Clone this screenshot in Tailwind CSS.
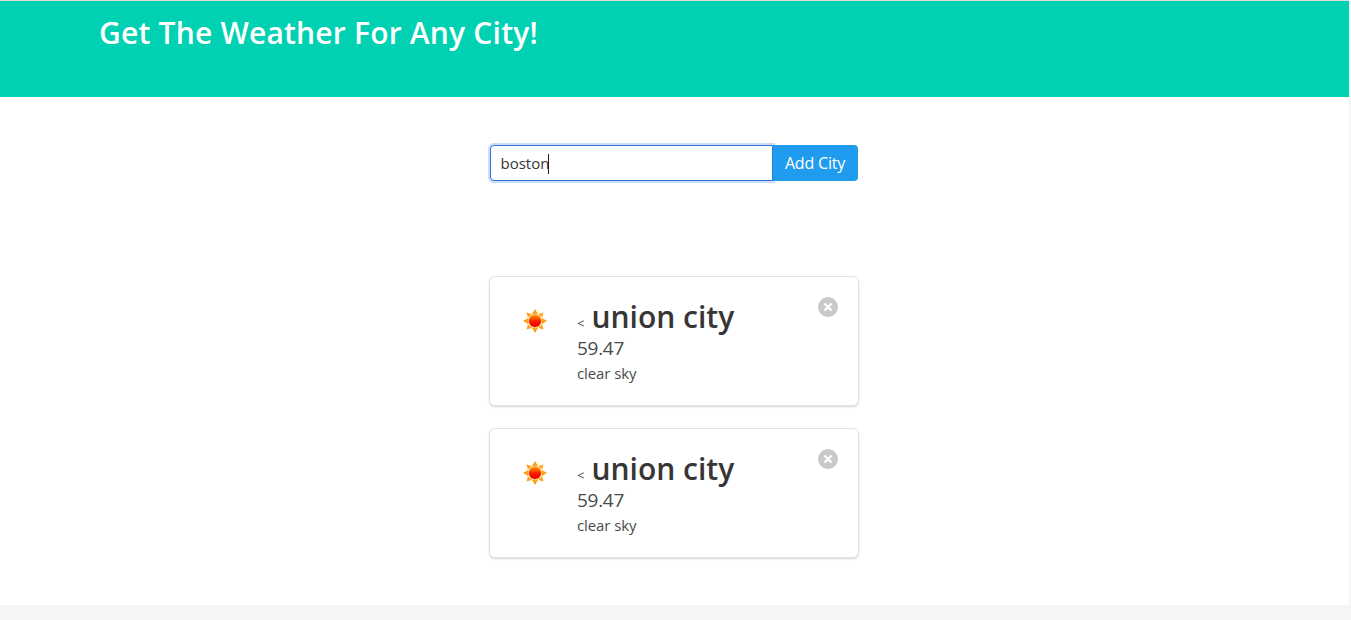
<!DOCTYPE html>
<html lang="en">
<head>
  <meta charset="UTF-8" />
  <title>Weather</title>
  <script src="https://cdn.jsdelivr.net/npm/@tailwindcss/browser@4"></script>
</head>
<body class="bg-[#f5f5f5] h-[620px] overflow-hidden font-['Open_Sans',sans-serif]">
<div class="w-[1349px] bg-white h-[605px] flex flex-col border-t border-[#dddddd]">
  <!-- Header -->
  <header class="bg-[#00d1b2] h-[96px] pl-[99px] pt-[12px]">
    <h1 class="text-white text-[30px] leading-[40px] font-semibold tracking-[0.2px]">Get The Weather For Any City!</h1>
  </header>

  <main class="flex flex-col items-center">
    <!-- Search -->
    <form class="flex w-[369px] mt-[48px] ml-[-1px]">
      <div class="w-[283px] h-[36px] bg-white border border-[#3273dc] rounded-l-[4px] shadow-[0_0_0_2px_rgba(50,115,220,0.25)] pl-[10px] flex items-center text-[15px] text-[#363636]">
        <span class="mt-[1px]">boston</span><span class="w-px h-[20px] bg-[#222222] ml-[-1px] mt-[1px]"></span>
      </div>
      <button type="button" class="w-[85px] h-[36px] bg-[#209cee] text-white text-[16px] tracking-[-0.2px] rounded-r-[4px]">Add City</button>
    </form>

    <!-- Cards -->
    <div class="flex flex-col gap-[22px] mt-[95px] ml-[-1px]">
      <div class="relative w-[370px] h-[130px] bg-white border border-[#e3e3e3] rounded-[6px] shadow-[0_1px_2px_rgba(10,10,10,0.18)] flex pl-[33px] pt-[32px]">
        <svg width="24" height="24" viewBox="0 0 24 24" class="shrink-0">
          <defs><linearGradient id="sun1" x1="0" y1="0" x2="0" y2="1"><stop offset="0" stop-color="#ff9a00"/><stop offset="0.55" stop-color="#ff1500"/><stop offset="1" stop-color="#ee0000"/></linearGradient></defs>
          <g fill="#ffa21c">
            <path d="M12 0l3 5h-6zM12 24l3-5h-6zM0 12l5-3v6zM24 12l-5-3v6zM3.5 3.5l5.2 1.4-3.8 3.8zM20.5 3.5l-5.2 1.4 3.8 3.8zM3.5 20.5l5.2-1.4-3.8-3.8zM20.5 20.5l-5.2-1.4 3.8-3.8z"/>
          </g>
          <circle cx="12" cy="12" r="7" fill="#ffb347"/>
          <circle cx="12" cy="12" r="6" fill="url(#sun1)"/>
        </svg>
        <div class="ml-[30px] mt-[-13px] text-[#4a4a4a]">
          <div class="h-[40px] mt-[1px] flex items-baseline text-[#363636]"><span class="text-[13px] text-[#4a4a4a] mr-[7px]">&lt;</span><span class="text-[30px] leading-[40px] font-semibold">union city</span></div>
          <div class="text-[19px] leading-[26px] mt-[-2px] tracking-[-0.3px]">59.47</div>
          <div class="text-[15px] leading-[24px] tracking-[-0.1px]">clear sky</div>
        </div>
        <div class="absolute left-[328px] top-[20px] w-[20px] h-[20px] rounded-full bg-[#c9c9c9] flex items-center justify-center">
          <svg width="10" height="10" viewBox="0 0 10 10"><path d="M1.5 1.5l7 7M8.5 1.5l-7 7" stroke="#fff" stroke-width="2.4"/></svg>
        </div>
      </div>

      <div class="relative w-[370px] h-[130px] bg-white border border-[#e3e3e3] rounded-[6px] shadow-[0_1px_2px_rgba(10,10,10,0.18)] flex pl-[33px] pt-[32px]">
        <svg width="24" height="24" viewBox="0 0 24 24" class="shrink-0">
          <defs><linearGradient id="sun2" x1="0" y1="0" x2="0" y2="1"><stop offset="0" stop-color="#ff9a00"/><stop offset="0.55" stop-color="#ff1500"/><stop offset="1" stop-color="#ee0000"/></linearGradient></defs>
          <g fill="#ffa21c">
            <path d="M12 0l3 5h-6zM12 24l3-5h-6zM0 12l5-3v6zM24 12l-5-3v6zM3.5 3.5l5.2 1.4-3.8 3.8zM20.5 3.5l-5.2 1.4 3.8 3.8zM3.5 20.5l5.2-1.4-3.8-3.8zM20.5 20.5l-5.2-1.4 3.8-3.8z"/>
          </g>
          <circle cx="12" cy="12" r="7" fill="#ffb347"/>
          <circle cx="12" cy="12" r="6" fill="url(#sun2)"/>
        </svg>
        <div class="ml-[30px] mt-[-13px] text-[#4a4a4a]">
          <div class="h-[40px] mt-[1px] flex items-baseline text-[#363636]"><span class="text-[13px] text-[#4a4a4a] mr-[7px]">&lt;</span><span class="text-[30px] leading-[40px] font-semibold">union city</span></div>
          <div class="text-[19px] leading-[26px] mt-[-2px] tracking-[-0.3px]">59.47</div>
          <div class="text-[15px] leading-[24px] tracking-[-0.1px]">clear sky</div>
        </div>
        <div class="absolute left-[328px] top-[20px] w-[20px] h-[20px] rounded-full bg-[#c9c9c9] flex items-center justify-center">
          <svg width="10" height="10" viewBox="0 0 10 10"><path d="M1.5 1.5l7 7M8.5 1.5l-7 7" stroke="#fff" stroke-width="2.4"/></svg>
        </div>
      </div>
    </div>
  </main>
</div>
</body>
</html>
